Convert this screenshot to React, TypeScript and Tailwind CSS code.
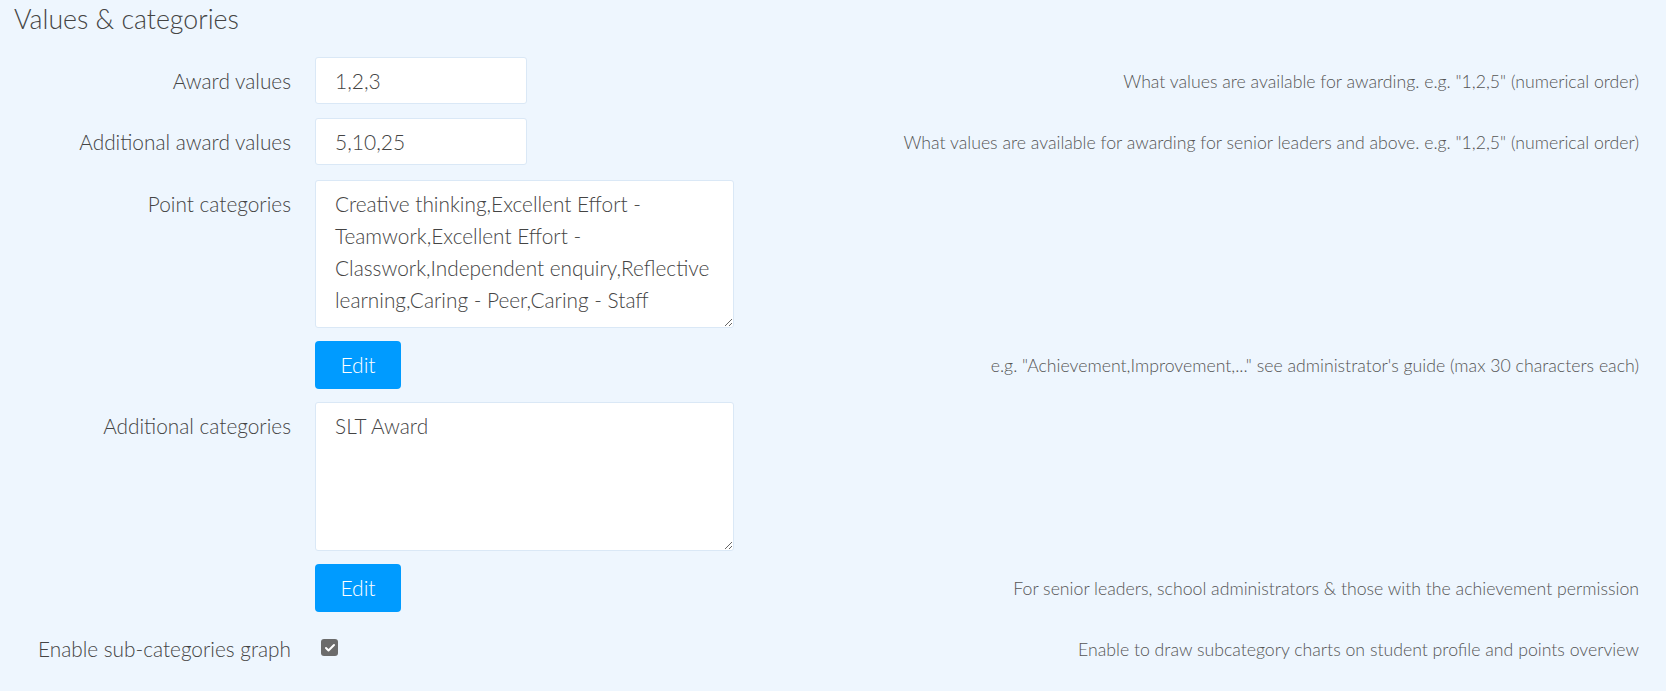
import { Check } from 'lucide-react'

const font = { fontFamily: 'Lato, "Open Sans", sans-serif' }

function Label({ children }: { children: React.ReactNode }) {
  return (
    <div className="w-[277px] shrink-0 pt-[8px] text-right text-[20.8px] leading-8 font-light text-[#444]">
      {children}
    </div>
  )
}

function Help({ children }: { children: React.ReactNode }) {
  return (
    <div className="flex-1 pt-[9px] text-right text-[17.7px] leading-8 font-light text-[#555]">
      {children}
    </div>
  )
}

function EditButton() {
  return (
    <button className="w-[86px] h-[48px] rounded-[4px] bg-[#009bff] text-white text-[21px] font-light hover:bg-[#0088e0]">
      Edit
    </button>
  )
}

export default function App() {
  return (
    <div style={font} className="min-h-[691px] bg-[#eef6fe] pl-[14px] pr-[27px]">
      <h2 className="pt-[4px] text-[26.7px] leading-[31px] font-light text-[#444]">Values &amp; categories</h2>

      <div className="mt-[22px] flex flex-col">
        {/* Award values */}
        <div className="flex items-start gap-[24px]">
          <Label>Award values</Label>
          <input
            defaultValue="1,2,3"
            className="w-[212px] h-[47px] px-[19px] bg-white border border-[#dae8f6] rounded-[3px] text-[21px] font-light text-[#444] outline-none"
          />
          <Help>What values are available for awarding. e.g. "1,2,5" (numerical order)</Help>
        </div>

        {/* Additional award values */}
        <div className="mt-[14px] flex items-start gap-[24px]">
          <Label>Additional award values</Label>
          <input
            defaultValue="5,10,25"
            className="w-[212px] h-[47px] px-[19px] bg-white border border-[#dae8f6] rounded-[3px] text-[21px] font-light text-[#444] outline-none"
          />
          <Help>What values are available for awarding for senior leaders and above. e.g. "1,2,5" (numerical order)</Help>
        </div>

        {/* Point categories */}
        <div className="mt-[15px] flex items-start gap-[24px]">
          <Label>Point categories</Label>
          <textarea
            defaultValue="Creative thinking,Excellent Effort - Teamwork,Excellent Effort - Classwork,Independent enquiry,Reflective learning,Caring - Peer,Caring - Staff"
            className="w-[419px] h-[148px] pl-[19px] pr-[12px] py-[7px] bg-white border border-[#dae8f6] rounded-[3px] text-[20.8px] leading-8 font-light text-[#444] outline-none overflow-hidden"
          />
        </div>
        <div className="mt-[13px] flex items-start gap-[24px]">
          <div className="w-[277px] shrink-0" />
          <EditButton />
          <Help>e.g. "Achievement,Improvement,..." see administrator's guide (max 30 characters each)</Help>
        </div>

        {/* Additional categories */}
        <div className="mt-[13px] flex items-start gap-[24px]">
          <Label>Additional categories</Label>
          <textarea
            defaultValue="SLT Award"
            className="w-[419px] h-[149px] pl-[19px] pr-[12px] py-[7px] bg-white border border-[#dae8f6] rounded-[3px] text-[20.8px] leading-8 font-light text-[#444] outline-none overflow-hidden"
          />
        </div>
        <div className="mt-[13px] flex items-start gap-[24px]">
          <div className="w-[277px] shrink-0" />
          <EditButton />
          <Help>For senior leaders, school administrators &amp; those with the achievement permission</Help>
        </div>

        {/* Sub-categories graph */}
        <div className="mt-[13px] flex items-start gap-[24px]">
          <Label>Enable sub-categories graph</Label>
          <div className="w-[23px] pt-[14px] pl-[6px] shrink-0">
            <span className="flex items-center justify-center w-[17px] h-[17px] rounded-[3px] bg-[#6b6b6b]">
              <Check size={12} strokeWidth={4} className="text-white" />
            </span>
          </div>
          <Help>Enable to draw subcategory charts on student profile and points overview</Help>
        </div>
      </div>
    </div>
  )
}
